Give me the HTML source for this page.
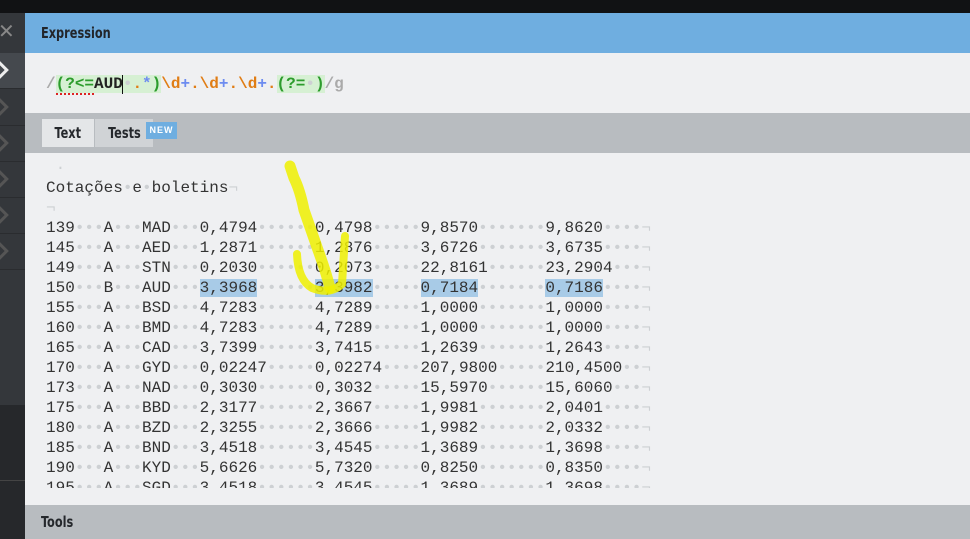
<!DOCTYPE html>
<html><head><meta charset="utf-8"><style>
*{margin:0;padding:0;box-sizing:border-box}
body{width:970px;height:539px;overflow:hidden;background:#eff0f2;position:relative;font-family:"Liberation Sans",sans-serif}
.top{position:absolute;left:0;top:0;width:970px;height:13px;background:#111214}
.side{position:absolute;left:0;top:13px;width:25px;height:392px;background:#34373b;overflow:hidden}
.side2{position:absolute;left:0;top:405px;width:25px;height:134px;background:#26282b}
.si{position:absolute;left:0;width:25px;height:36px;border-bottom:1px solid #2a2c2f}
.si span{position:absolute;left:-8px;top:10px;width:14px;height:14px;transform:rotate(45deg);border:3px solid #555}
.cond{display:inline-block;transform:scaleX(0.84);transform-origin:left center}
.hdr{position:absolute;left:25px;top:13px;width:945px;height:40px;background:#6faee0;color:#22252a;font-weight:bold;font-size:15px;padding:11px 0 0 16px;font-family:"DejaVu Sans Condensed","Liberation Sans",sans-serif}
.expr{position:absolute;left:25px;top:53px;width:945px;height:60px;background:#eff0f2}
.re{position:absolute;left:46px;top:74px;font:bold 16px/20px "Liberation Mono",monospace;white-space:pre;color:#222}
.g{color:#2c9c2c}.o{color:#e07d15}.b{color:#6d8cf0}.gr{color:#aaa}.bg{background:#d6f0d3}
.tabs{position:absolute;left:25px;top:113px;width:945px;height:40px;background:#b8bcc0}
.tab{position:absolute;top:6px;height:28px;font:bold 15px/28px "DejaVu Sans Condensed","Liberation Sans",sans-serif;color:#25282c;text-align:center}
.new{position:absolute;left:121px;top:9px;width:31px;height:17px;background:#6faee0;color:#fff;font:bold 9px/17px "Liberation Sans",sans-serif;text-align:center;letter-spacing:1px}
.txt{position:absolute;left:46px;top:158px;width:610px;height:330px;overflow:hidden;font:16px/20px "Liberation Mono",monospace;white-space:pre;color:#333}
.d{color:#cdd0d3}
.h{background:#a8cbe7}
.tools{position:absolute;left:25px;top:505px;width:945px;height:34px;background:#b8bcc0;font:bold 15px/34px "DejaVu Sans Condensed","Liberation Sans",sans-serif;color:#25282c;padding-left:16px}
</style></head><body>
<div class="top"></div>
<div class="side">
<div style="position:absolute;left:-2px;top:8px;color:#888;font:bold 20px/20px 'DejaVu Sans',sans-serif">✕</div>
<div class="si" style="top:40px;background:#45494e"><span style="border-color:#eee"></span></div>
<div class="si" style="top:77px"><span></span></div>
<div class="si" style="top:113px"><span></span></div>
<div class="si" style="top:149px"><span></span></div>
<div class="si" style="top:185px"><span></span></div>
<div class="si" style="top:221px"><span></span></div>
</div>
<div class="side2"><div style="position:absolute;left:0;top:75px;width:25px;height:1px;background:#444"></div></div>
<div class="hdr"><span class="cond">Expression</span></div>
<div class="expr"></div>
<div class="re"><span class="gr">/</span><span class="bg"><span class="g">(?&lt;=</span>AUD<span class="d">•</span><span class="o">.</span><span class="b">*</span><span class="g">)</span></span><span class="o">\d</span><span class="b">+</span><span class="o">.\d</span><span class="b">+</span><span class="o">.\d</span><span class="b">+</span><span class="o">.</span><span class="bg"><span class="g">(?=</span><span class="d">•</span><span class="g">)</span></span><span class="gr">/g</span></div>
<div style="position:absolute;left:56px;top:93px;width:38px;border-top:2px dotted #d22"></div>
<div style="position:absolute;left:122px;top:75px;width:1px;height:19px;background:#111"></div>
<div class="tabs">
<div class="tab" style="left:17px;width:52px;background:#e4e6e8"><span class="cond" style="transform-origin:center">Text</span></div>
<div class="tab" style="left:70px;width:58px;background:#d0d3d6"><span class="cond" style="transform-origin:center">Tests</span></div>
<div class="new">NEW</div>
</div>
<div class="txt"><span class="d"> ·</span>
Cotações<span class="d">•</span>e<span class="d">•</span>boletins<span class="d">¬</span>
<span class="d">¬</span>
139<span class="d">•••</span>A<span class="d">•••</span>MAD<span class="d">•••</span>0,4794<span class="d">••••••</span>0,4798<span class="d">•••••</span>9,8570<span class="d">•••••••</span>9,8620<span class="d">••••¬</span>
145<span class="d">•••</span>A<span class="d">•••</span>AED<span class="d">•••</span>1,2871<span class="d">••••••</span>1,2876<span class="d">•••••</span>3,6726<span class="d">•••••••</span>3,6735<span class="d">••••¬</span>
149<span class="d">•••</span>A<span class="d">•••</span>STN<span class="d">•••</span>0,2030<span class="d">••••••</span>0,2073<span class="d">•••••</span>22,8161<span class="d">••••••</span>23,2904<span class="d">•••¬</span>
150<span class="d">•••</span>B<span class="d">•••</span>AUD<span class="d">•••</span><span class="h">3,3968</span><span class="d">••••••</span><span class="h">3,3982</span><span class="d">•••••</span><span class="h">0,7184</span><span class="d">•••••••</span><span class="h">0,7186</span><span class="d">••••¬</span>
155<span class="d">•••</span>A<span class="d">•••</span>BSD<span class="d">•••</span>4,7283<span class="d">••••••</span>4,7289<span class="d">•••••</span>1,0000<span class="d">•••••••</span>1,0000<span class="d">••••¬</span>
160<span class="d">•••</span>A<span class="d">•••</span>BMD<span class="d">•••</span>4,7283<span class="d">••••••</span>4,7289<span class="d">•••••</span>1,0000<span class="d">•••••••</span>1,0000<span class="d">••••¬</span>
165<span class="d">•••</span>A<span class="d">•••</span>CAD<span class="d">•••</span>3,7399<span class="d">••••••</span>3,7415<span class="d">•••••</span>1,2639<span class="d">•••••••</span>1,2643<span class="d">••••¬</span>
170<span class="d">•••</span>A<span class="d">•••</span>GYD<span class="d">•••</span>0,02247<span class="d">•••••</span>0,02274<span class="d">••••</span>207,9800<span class="d">•••••</span>210,4500<span class="d">••¬</span>
173<span class="d">•••</span>A<span class="d">•••</span>NAD<span class="d">•••</span>0,3030<span class="d">••••••</span>0,3032<span class="d">•••••</span>15,5970<span class="d">••••••</span>15,6060<span class="d">•••¬</span>
175<span class="d">•••</span>A<span class="d">•••</span>BBD<span class="d">•••</span>2,3177<span class="d">••••••</span>2,3667<span class="d">•••••</span>1,9981<span class="d">•••••••</span>2,0401<span class="d">••••¬</span>
180<span class="d">•••</span>A<span class="d">•••</span>BZD<span class="d">•••</span>2,3255<span class="d">••••••</span>2,3666<span class="d">•••••</span>1,9982<span class="d">•••••••</span>2,0332<span class="d">••••¬</span>
185<span class="d">•••</span>A<span class="d">•••</span>BND<span class="d">•••</span>3,4518<span class="d">••••••</span>3,4545<span class="d">•••••</span>1,3689<span class="d">•••••••</span>1,3698<span class="d">••••¬</span>
190<span class="d">•••</span>A<span class="d">•••</span>KYD<span class="d">•••</span>5,6626<span class="d">••••••</span>5,7320<span class="d">•••••</span>0,8250<span class="d">•••••••</span>0,8350<span class="d">••••¬</span>
195<span class="d">•••</span>A<span class="d">•••</span>SGD<span class="d">•••</span>3,4518<span class="d">••••••</span>3,4545<span class="d">•••••</span>1,3689<span class="d">•••••••</span>1,3698<span class="d">••••¬</span></div>
<svg style="position:absolute;left:0;top:0" width="970" height="539">
<path d="M290 166 L294 178 Q300 190 304 210 L318 250 Q326 272 330 288" stroke="#eef000" stroke-width="11" fill="none" stroke-linecap="round" opacity="0.85"/>
<path d="M297 254 Q298 280 312 288 Q330 295 342 284 L345 236" stroke="#eef000" stroke-width="8" fill="none" stroke-linecap="round" opacity="0.85"/>
</svg>
<div class="tools"><span class="cond">Tools</span></div>
</body></html>
